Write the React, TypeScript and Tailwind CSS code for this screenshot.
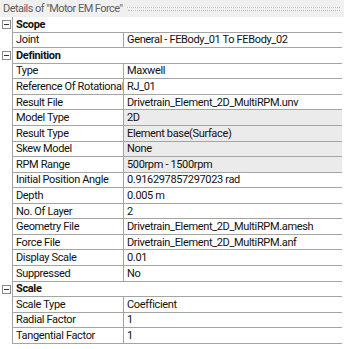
type Row =
  | { kind: "section"; title: string }
  | { kind: "prop"; label: string; value: string; shaded?: boolean };

const rows: Row[] = [
  { kind: "section", title: "Scope" },
  { kind: "prop", label: "Joint", value: "General - FEBody_01 To FEBody_02" },
  { kind: "section", title: "Definition" },
  { kind: "prop", label: "Type", value: "Maxwell" },
  { kind: "prop", label: "Reference Of Rotational", value: "RJ_01" },
  { kind: "prop", label: "Result File", value: "Drivetrain_Element_2D_MultiRPM.unv" },
  { kind: "prop", label: "Model Type", value: "2D", shaded: true },
  { kind: "prop", label: "Result Type", value: "Element base(Surface)", shaded: true },
  { kind: "prop", label: "Skew Model", value: "None", shaded: true },
  { kind: "prop", label: "RPM Range", value: "500rpm - 1500rpm", shaded: true },
  { kind: "prop", label: "Initial Position Angle", value: "0.916297857297023 rad" },
  { kind: "prop", label: "Depth", value: "0.005 m" },
  { kind: "prop", label: "No. Of Layer", value: "2" },
  { kind: "prop", label: "Geometry File", value: "Drivetrain_Element_2D_MultiRPM.amesh" },
  { kind: "prop", label: "Force File", value: "Drivetrain_Element_2D_MultiRPM.anf" },
  { kind: "prop", label: "Display Scale", value: "0.01" },
  { kind: "prop", label: "Suppressed", value: "No" },
  { kind: "section", title: "Scale" },
  { kind: "prop", label: "Scale Type", value: "Coefficient" },
  { kind: "prop", label: "Radial Factor", value: "1" },
  { kind: "prop", label: "Tangential Factor", value: "1" },
];

function CollapseBox() {
  return (
    <div className="flex h-[9px] w-[9px] items-center justify-center border border-[#8a8a8a] bg-white">
      <div className="h-px w-[5px] bg-[#333]" />
    </div>
  );
}

export default function App() {
  return (
    <div
      className="h-[349px] w-[344px] overflow-hidden bg-white text-[11px] leading-none tracking-[-0.35px] whitespace-nowrap text-[#111]"
      style={{ fontFamily: 'Roboto, Lato, "Liberation Sans", sans-serif' }}
    >
      <div className="flex h-[17px] items-center gap-[5px] bg-[#f0f0f0] pl-[3px] pr-[4px]">
        <span className="shrink-0 text-[11px] tracking-[-0.55px] text-[#5e5e5e]">Details of "Motor EM Force"</span>
        <div className="flex flex-1 flex-col gap-[2px]">
          <div className="border-t border-dotted border-[#c4c4c4]" />
          <div className="ml-[1px] border-t border-dotted border-[#c4c4c4]" />
        </div>
      </div>

      <div className="pr-[2px]">
        {rows.map((row, i) =>
          row.kind === "section" ? (
            <div key={i} className="flex h-[15.57px]">
              <div className="flex w-[12px] shrink-0 items-center pl-[2px]">
                <CollapseBox />
              </div>
              <div className="flex flex-1 items-center border-b border-l border-[#a4a4a4] pl-[3px] font-bold">
                {row.title}
              </div>
            </div>
          ) : (
            <div key={i} className="flex h-[15.57px]">
              <div className="w-[12px] shrink-0" />
              <div className="flex w-[112px] shrink-0 items-center overflow-hidden border-b border-l border-r border-[#a4a4a4] pl-[3px]">
                {row.label}
              </div>
              <div
                className={
                  "flex min-w-0 flex-1 items-center overflow-hidden border-b border-[#a4a4a4] pl-[3px] " +
                  (row.shaded ? "bg-[#ebebeb]" : "bg-white")
                }
              >
                {row.value}
              </div>
            </div>
          )
        )}
      </div>
    </div>
  );
}
